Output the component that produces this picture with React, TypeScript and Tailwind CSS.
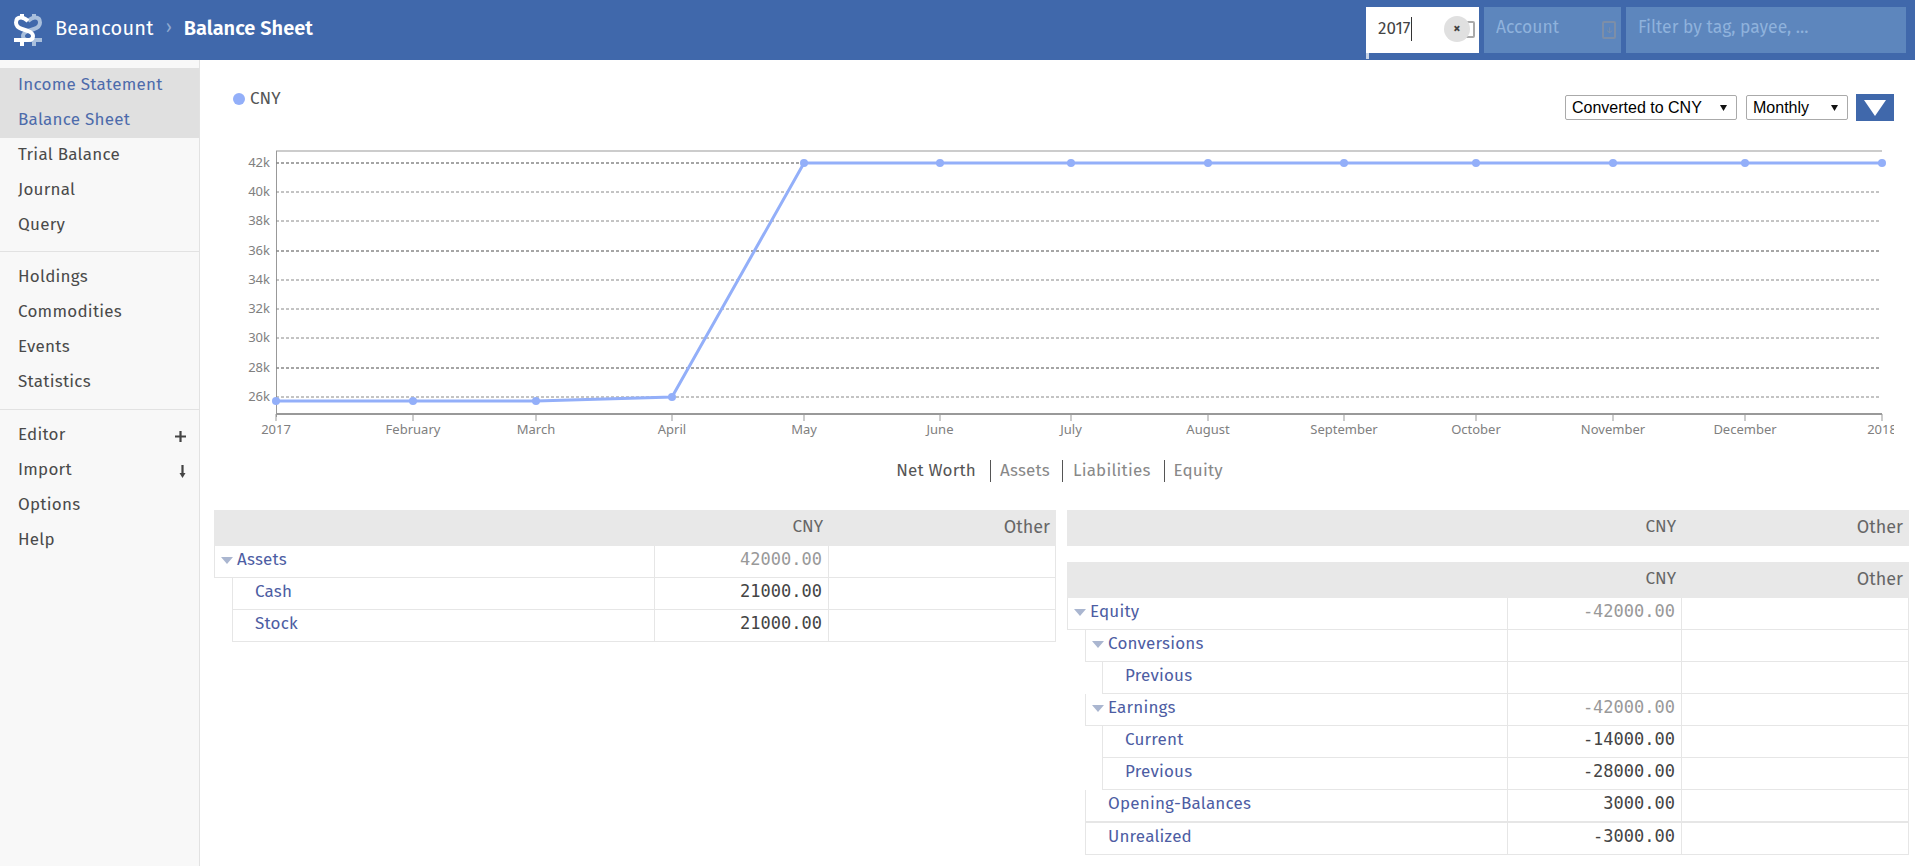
import React from "react";

const UI_FONT = "font-['Fira_Sans','Noto_Sans','Open_Sans',sans-serif]";

const months = [
  { label: "2017", x: 76 },
  { label: "February", x: 213 },
  { label: "March", x: 336 },
  { label: "April", x: 472 },
  { label: "May", x: 604 },
  { label: "June", x: 740 },
  { label: "July", x: 871 },
  { label: "August", x: 1008 },
  { label: "September", x: 1144 },
  { label: "October", x: 1276 },
  { label: "November", x: 1413 },
  { label: "December", x: 1545 },
  { label: "2018", x: 1682 },
];

const ticks = [
  { label: "42k", y: 33, heavy: true },
  { label: "40k", y: 62 },
  { label: "38k", y: 91 },
  { label: "36k", y: 121, heavy: true },
  { label: "34k", y: 150 },
  { label: "32k", y: 179 },
  { label: "30k", y: 208 },
  { label: "28k", y: 238, heavy: true },
  { label: "26k", y: 267 },
];

const points: [number, number][] = [
  [76, 271], [213, 271], [336, 271], [472, 267], [604, 33], [740, 33], [871, 33],
  [1008, 33], [1144, 33], [1276, 33], [1413, 33], [1545, 33], [1682, 33],
];

type Row = { name: string; depth: 0 | 1 | 2; toggle?: boolean; cny?: string; muted?: boolean; thick?: boolean };

const assets: Row[] = [
  { name: "Assets", depth: 0, toggle: true, cny: "42000.00", muted: true },
  { name: "Cash", depth: 1, cny: "21000.00" },
  { name: "Stock", depth: 1, cny: "21000.00" },
];

const equity: Row[] = [
  { name: "Equity", depth: 0, toggle: true, cny: "-42000.00", muted: true },
  { name: "Conversions", depth: 1, toggle: true },
  { name: "Previous", depth: 2 },
  { name: "Earnings", depth: 1, toggle: true, cny: "-42000.00", muted: true },
  { name: "Current", depth: 2, cny: "-14000.00" },
  { name: "Previous", depth: 2, cny: "-28000.00" },
  { name: "Opening-Balances", depth: 1, cny: "3000.00", thick: true },
  { name: "Unrealized", depth: 1, cny: "-3000.00" },
];

function Logo() {
  return (
    <svg width="30" height="33" viewBox="-1 0 30 33" fill="none" strokeWidth="4">
      <path d="M14 7 Q18 3.5 21 3.5 Q26 3.5 26 8.5 Q26 13 20 15 L14 17 Q9 19 9 22 Q9 26 14 26 H28 M20 26 V32 M20 0 V4" stroke="#a9bfdc" />
      <path d="M14 7 Q10 3.5 7 3.5 Q2 3.5 2 8.5 Q2 13 8 15 L14 17 Q19 19 19 22 Q19 26 14 26 H0 M8 26 V32 M8 0 V4" stroke="#ffffff" />
    </svg>
  );
}

function SideLink({ label, active, icon }: { label: string; active?: boolean; icon?: React.ReactNode }) {
  return (
    <a className={`flex h-[35px] items-center justify-between pb-[1px] pl-[18px] pr-[13px] text-[17px] tracking-[0.25px] ${active ? "text-[#4d6bab]" : "text-[#4a4a4a]"}`}>
      <span>{label}</span>
      {icon}
    </a>
  );
}

function Sidebar() {
  return (
    <aside className="w-[200px] shrink-0 border-r border-[#e2e2e2] bg-[#f8f8f8] pt-[8px]">
      <div className="bg-[#e0e0e0]">
        <SideLink label="Income Statement" active />
        <SideLink label="Balance Sheet" active />
      </div>
      <SideLink label="Trial Balance" />
      <SideLink label="Journal" />
      <SideLink label="Query" />
      <div className="mb-[8px] mt-[8px] border-t border-[#e2e2e2]" />
      <SideLink label="Holdings" />
      <SideLink label="Commodities" />
      <SideLink label="Events" />
      <SideLink label="Statistics" />
      <div className="mb-[8px] mt-[9px] border-t border-[#e2e2e2]" />
      <SideLink
        label="Editor"
        icon={
          <svg width="11" height="11" viewBox="0 0 11 11" className="mt-[3px]">
            <path d="M5.5 0 V11 M0 5.5 H11" stroke="#444" strokeWidth="2.2" />
          </svg>
        }
      />
      <SideLink
        label="Import"
        icon={
          <svg width="7" height="13" viewBox="0 0 7 13" className="mt-[3px]">
            <path d="M3.5 0 V9" stroke="#444" strokeWidth="2.2" />
            <path d="M0.5 8 H6.5 L3.5 13 Z" fill="#444" />
          </svg>
        }
      />
      <SideLink label="Options" />
      <SideLink label="Help" />
    </aside>
  );
}

function Header() {
  return (
    <header className="flex h-[60px] items-center bg-[#4068ab] text-white">
      <div className="ml-[13px] flex w-[42px] items-center">
        <Logo />
      </div>
      <span className="pb-[5px] text-[20px] tracking-[0.2px]">Beancount</span>
      <span className="mx-[12px] pb-[5px] text-[18px] text-[#8fa8cf]">›</span>
      <span className="pb-[5px] text-[20px] font-semibold">Balance Sheet</span>
      <div className="ml-auto mr-[9px] flex h-[46px] gap-[5px]">
        <div className="relative flex w-[113px] items-center bg-white pb-[3px] pl-[12px] text-[17px] text-[#444]">
          <span className="border-r border-[#333] pr-px leading-[24px]">2017</span>
          <span className="absolute right-[4px] top-[14px] h-[17px] w-[10px] rounded-[2px] border-2 border-[#aaa]" />
          <span className="absolute left-[78px] top-[9px] flex h-[26px] w-[26px] items-center justify-center rounded-full bg-[#e0e0e0] text-[14px] font-bold leading-none text-[#444]">×</span>
          <span className="absolute -bottom-[6px] left-0 h-[6px] w-[3px] bg-[#c8d4e6]" />
        </div>
        <div className="relative w-[137px] bg-[#5d86bd]">
          <input readOnly placeholder="Account" className="h-full w-full bg-transparent pb-[5px] pl-[12px] text-[17.5px] outline-none placeholder:text-[#8fb2dc]" />
          <span className="absolute right-[5px] top-[14px] flex h-[18px] w-[14px] items-center justify-center rounded-[2px] border-2 border-[#7c8ea8] text-[9px] leading-none text-[#7c8ea8]">↓</span>
        </div>
        <div className="w-[280px] bg-[#5d86bd]">
          <input readOnly placeholder="Filter by tag, payee, ..." className="h-full w-full bg-transparent pb-[5px] pl-[12px] text-[17.5px] outline-none placeholder:text-[#8fb2dc]" />
        </div>
      </div>
    </header>
  );
}

function FakeSelect({ label, width }: { label: string; width: string }) {
  return (
    <div className={`flex h-[25px] items-center justify-between rounded-[2px] border border-[#aaa] bg-white pl-[6px] pr-[9px] font-['Liberation_Sans',sans-serif] text-[16px] text-black ${width}`}>
      <span>{label}</span>
      <svg width="7" height="6" viewBox="0 0 7 6">
        <path d="M0 0 H7 L3.5 6 Z" fill="#111" />
      </svg>
    </div>
  );
}

function Chart() {
  const line = points.map(([x, y]) => `${x},${y}`).join(" ");
  return (
    <svg width="1694" height="310" className="block font-['Noto_Sans',sans-serif]" fontSize="13">
      <path d="M76 21 H1682" stroke="#999" strokeWidth="1" fill="none" />
      <path d="M76.5 21 V287" stroke="#999" strokeWidth="1" fill="none" />
      {ticks.map((t) => (
        <g key={t.label}>
          <line x1="76" x2="1679" y1={t.y} y2={t.y} stroke="#888" strokeWidth={t.heavy ? 1.6 : 1} strokeDasharray="3 2" />
          <text x="70" y={t.y + 4} textAnchor="end" fill="#808080">{t.label}</text>
        </g>
      ))}
      <path d="M76 284 H1682" stroke="#999" strokeWidth="2" fill="none" />
      {months.map((m) => (
        <g key={m.label}>
          <line x1={m.x} x2={m.x} y1="284" y2="291" stroke="#999" />
          <text x={m.x} y="304" textAnchor="middle" fill="#808080">{m.label}</text>
        </g>
      ))}
      <polyline points={line} fill="none" stroke="#93aff9" strokeWidth="3" />
      {points.map(([x, y]) => (
        <circle key={x} cx={x} cy={y} r="4" fill="#93aff9" />
      ))}
    </svg>
  );
}

function TableHead() {
  return (
    <div className="flex h-[36px] items-center bg-[#e8e8e8] pb-[2px] text-[17px] text-[#666]">
      <div className="flex-1" />
      <div className="w-[174px] pr-[6px] text-right">CNY</div>
      <div className="w-[227px] pr-[6px] text-right text-[18px]">Other</div>
    </div>
  );
}

function TreeRow({ row }: { row: Row }) {
  const indent = row.depth === 0 ? "" : row.depth === 1 ? "ml-[18px]" : "ml-[35px]";
  const pad = row.depth === 2 ? "pl-[22px]" : row.toggle ? "pl-[6px]" : "pl-[22px]";
  const bottom = row.thick ? "h-[33px] border-b-2" : "h-[32px] border-b";
  return (
    <div className={`flex border-x border-[#e6e6e6] ${bottom} ${indent}`}>
      <div className={`flex flex-1 items-center gap-[4px] pb-[3px] ${pad} text-[17px] tracking-[0.2px] text-[#4d5da3]`}>
        {row.toggle && (
          <svg width="12" height="7" viewBox="0 0 12 7">
            <path d="M0 0 H12 L6 7 Z" fill="#aab6d0" />
          </svg>
        )}
        <span>{row.name}</span>
      </div>
      <div className={`flex w-[174px] items-center justify-end border-l border-[#e6e6e6] pb-[3px] pr-[6px] font-['DejaVu_Sans_Mono',monospace] text-[17px] ${row.muted ? "text-[#999]" : "text-[#444]"}`}>
        {row.cny}
      </div>
      <div className="w-[227px] border-l border-[#e6e6e6]" />
    </div>
  );
}

export default function App() {
  return (
    <div className={`flex h-[866px] w-[1915px] flex-col overflow-hidden bg-white ${UI_FONT}`}>
      <Header />
      <div className="flex flex-1">
        <Sidebar />
        <main className="flex-1">
          <div className="flex h-[70px] items-start justify-between pr-[21px] pt-[34px]">
            <div className="-mt-[8px] ml-[33px] flex items-center gap-[5px] text-[17px] text-[#555]">
              <span className="h-[12px] w-[12px] rounded-full bg-[#93aff9]" />
              <span>CNY</span>
            </div>
            <div className="flex items-center gap-[9px]">
              <FakeSelect label="Converted to CNY" width="w-[172px]" />
              <FakeSelect label="Monthly" width="w-[102px]" />
              <button className="-ml-px flex h-[27px] w-[38px] items-center justify-center bg-[#4068ab]">
                <svg width="22" height="16" viewBox="0 0 22 16">
                  <path d="M0 0 H22 L11 16 Z" fill="#fff" />
                </svg>
              </button>
            </div>
          </div>
          <Chart />
          <div className="flex h-[70px] items-start justify-center pl-[4px] pt-[20px] text-[17px] leading-[22px] tracking-[0.2px] text-[#888]">
            <span className="pr-[14px] text-[#555]">Net Worth</span>
            <span className="border-l border-[#555] pl-[9px] pr-[12px]">Assets</span>
            <span className="border-l border-[#555] pl-[10px] pr-[13px]">Liabilities</span>
            <span className="border-l border-[#555] pl-[9px]">Equity</span>
          </div>
          <div className="grid grid-cols-2 gap-[11px] pl-[14px] pr-[6px]">
            <div>
              <TableHead />
              {assets.map((r) => (
                <TreeRow key={r.name} row={r} />
              ))}
            </div>
            <div>
              <TableHead />
              <div className="mt-[16px]">
                <TableHead />
              </div>
              {equity.map((r, i) => (
                <TreeRow key={i} row={r} />
              ))}
            </div>
          </div>
        </main>
      </div>
    </div>
  );
}
